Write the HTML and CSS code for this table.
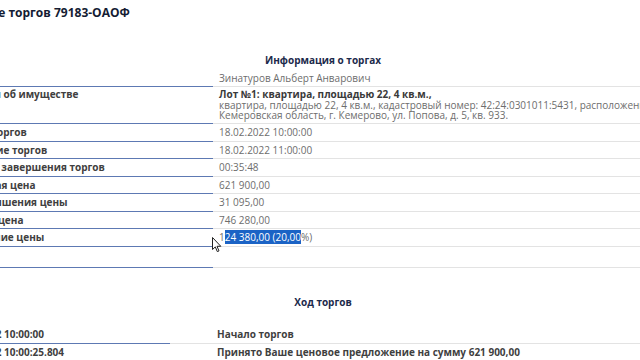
FILE: index.html
```html
<!DOCTYPE html>
<html lang="ru">
<head>
<meta charset="utf-8">
<title>Проведение торгов 79183-ОАОФ</title>
<link rel="stylesheet" href="styles.css">
</head>
<body>
<div class="page">
  <div class="head">
    <h1 class="page-title">Проведение торгов 79183-ОАОФ</h1>
    <a class="back-link" href="#">Вернуться к торгам</a>
  </div>

  <h2 class="section-title">Информация о торгах</h2>
  <table class="info">
    <tr class="first">
      <td class="label"></td>
      <td class="value">Зинатуров Альберт Анварович</td>
    </tr>
    <tr class="multi">
      <td class="label">Сведения об имуществе</td>
      <td class="value"><b class="lot">Лот №1: квартира, площадью 22, 4 кв.м.,</b><br>квартира, площадью 22, 4 кв.м., кадастровый номер: 42:24:0301011:5431, расположенная по адресу: Кемеровская область, г. Кемерово, ул. Попова, д. 5, кв. 933.</td>
    </tr>
    <tr>
      <td class="label">Начало торгов</td>
      <td class="value">18.02.2022 10:00:00</td>
    </tr>
    <tr>
      <td class="label">Окончание торгов</td>
      <td class="value">18.02.2022 11:00:00</td>
    </tr>
    <tr>
      <td class="label">Время до завершения торгов</td>
      <td class="value">00:35:48</td>
    </tr>
    <tr>
      <td class="label">Начальная цена</td>
      <td class="value">621 900,00</td>
    </tr>
    <tr>
      <td class="label">Шаг повышения цены</td>
      <td class="value">31 095,00</td>
    </tr>
    <tr>
      <td class="label">Текущая цена</td>
      <td class="value">746 280,00</td>
    </tr>
    <tr>
      <td class="label">Повышение цены</td>
      <td class="value">1<span class="selected">24 380,00 (20,00</span>%)</td>
    </tr>
    <tr class="empty">
      <td class="label"></td>
      <td class="value"></td>
    </tr>
  </table>

  <h2 class="section-title section-title--progress">Ход торгов</h2>
  <table class="log">
    <tr>
      <td class="time">18.02.2022 10:00:00</td>
      <td class="event">Начало торгов</td>
    </tr>
    <tr>
      <td class="time">18.02.2022 10:00:25.804</td>
      <td class="event">Принято Ваше ценовое предложение на сумму 621 900,00</td>
    </tr>
  </table>
</div>

<svg class="cursor" width="10" height="16" viewBox="0 0 10 16" aria-hidden="true">
  <path d="M0.5 0.5 L0.5 12.5 L3.3 9.9 L5.3 14.6 L7 13.9 L5 9.3 L8.8 9.3 Z" fill="#fff" stroke="#222" stroke-width="1" stroke-linejoin="round"/>
</svg>
</body>
</html>
```

FILE: styles.css
```css
html, body {
  margin: 0;
  padding: 0;
  background: #ffffff;
}

body {
  width: 640px;
  height: 360px;
  overflow: hidden;
  position: relative;
  font-family: "Open Sans", "DejaVu Sans", sans-serif;
  font-size: 10px;
  color: #6d6d6d;
}

.page {
  width: 834px;
  margin-left: -94px;
}

.head {
  padding-left: 44px;
}

.page-title {
  margin: 5px 0 0 -22px;
  font-size: 12px;
  line-height: 16px;
  font-weight: 700;
  color: #141c33;
}

.back-link {
  display: block;
  width: max-content;
  margin: 8px 0 0 -40px;
  font-size: 9px;
  line-height: 12px;
  color: #3b6fc7;
  text-decoration: underline;
}

.section-title {
  margin: 12px 0 2px;
  text-align: center;
  font-size: 10px;
  line-height: 14px;
  font-weight: 700;
  color: #1c2a4b;
}

.section-title--progress {
  margin: 27px 0 17px;
}

table {
  width: 100%;
  border-collapse: collapse;
}

td {
  padding: 2.5px 0;
  line-height: 11px;
  vertical-align: top;
}

tr:nth-child(odd) td {
  padding-top: 3px;
  padding-bottom: 3px;
}

.info .label {
  width: 263px;
  padding-left: 44px;
  font-weight: 700;
  color: #404040;
  border-bottom: 1.5px solid #5d79b3;
}

.info .value {
  padding-left: 6px;
  border-bottom: 1px solid #e3e3e3;
}

.info .first td {
  padding-top: 3.5px;
  padding-bottom: 2px;
}

.info .multi td {
  padding-top: 2.5px;
  padding-bottom: 2.5px;
  line-height: 10.6px;
}

.lot {
  color: #3a3a3a;
}

.selected {
  background: #1b63c5;
  color: #ffffff;
}

.info .empty td {
  height: 15px;
}

.log td {
  font-weight: 700;
  color: #404040;
}

.log .time {
  width: 220px;
  padding-left: 44px;
  border-bottom: 1.5px solid #5d79b3;
}

.log .event {
  padding-left: 47px;
  border-bottom: 1px solid #e3e3e3;
  color: #3f3f3f;
}

.cursor {
  position: absolute;
  left: 212px;
  top: 237px;
}
```
